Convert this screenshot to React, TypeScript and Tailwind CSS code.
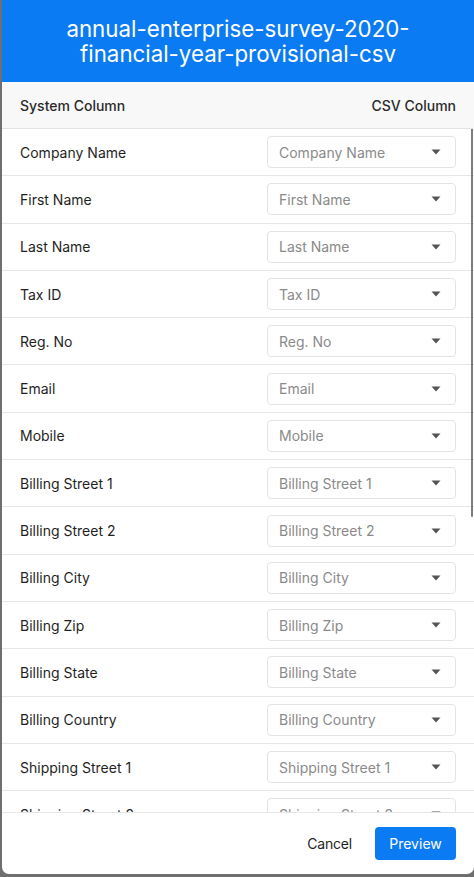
import React from 'react';

const FIELDS = [
  'Company Name',
  'First Name',
  'Last Name',
  'Tax ID',
  'Reg. No',
  'Email',
  'Mobile',
  'Billing Street 1',
  'Billing Street 2',
  'Billing City',
  'Billing Zip',
  'Billing State',
  'Billing Country',
  'Shipping Street 1',
  'Shipping Street 2',
  'Shipping City',
];

function Caret() {
  return (
    <svg width="10" height="6" viewBox="0 0 10 6" className="shrink-0">
      <path d="M0.5 0.5 L9.5 0.5 L5 5.5 Z" fill="#555" />
    </svg>
  );
}

function FieldRow({ label }: { label: string }) {
  return (
    <div className="h-[47.3px] shrink-0 flex items-center justify-between pl-[18px] pr-[18px] border-b border-[#e6e6e6]">
      <span className="text-[14px] text-[#1f1f1f]">{label}</span>
      <div className="w-[189px] h-[32px] flex items-center justify-between pl-[11px] pr-[14px] border border-[#e3e3e3] rounded-[4px] bg-white">
        <span className="text-[14px] text-[#8a8a8a]">{label}</span>
        <Caret />
      </div>
    </div>
  );
}

export default function App() {
  return (
    <div
      className="h-[877px] w-[474px] bg-[#6f6f6f] overflow-hidden"
      style={{ fontFamily: 'Inter, "Noto Sans", sans-serif' }}
    >
      <div className="ml-[2px] w-[472px] h-[874px] bg-white rounded-b-[7px] overflow-hidden flex flex-col">
        {/* title */}
        <div className="h-[82px] shrink-0 bg-[#0b7bf4] flex items-center justify-center px-4">
          <h1 className="text-white text-[22.3px] leading-[25px] text-center font-normal">
            annual-enterprise-survey-2020-
            <br />
            financial-year-provisional-csv
          </h1>
        </div>

        {/* column header */}
        <div className="h-[47px] shrink-0 flex items-center justify-between pl-[18px] pr-[18px] bg-[#f8f8f8] border-b border-[#e3e3e3]">
          <span className="text-[14px] font-medium text-[#2b2b2b]">System Column</span>
          <span className="text-[14px] font-medium text-[#2b2b2b]">CSV Column</span>
        </div>

        {/* rows */}
        <div className="relative flex-1 overflow-hidden flex flex-col">
          {FIELDS.map((f) => (
            <FieldRow key={f} label={f} />
          ))}
          <div className="absolute right-[1px] top-[-36px] w-[2.5px] h-[424px] bg-[#7d7d7d] rounded-full" />
        </div>

        {/* footer */}
        <div className="h-[62px] shrink-0 border-t border-[#e6e6e6] flex items-center justify-end gap-[23px] pr-[18px]">
          <button className="text-[14px] text-[#1f1f1f] tracking-[-0.2px]">Cancel</button>
          <button className="w-[81px] h-[33px] rounded-[4px] bg-[#0b7bf4] text-white text-[14px]">
            Preview
          </button>
        </div>
      </div>
    </div>
  );
}
